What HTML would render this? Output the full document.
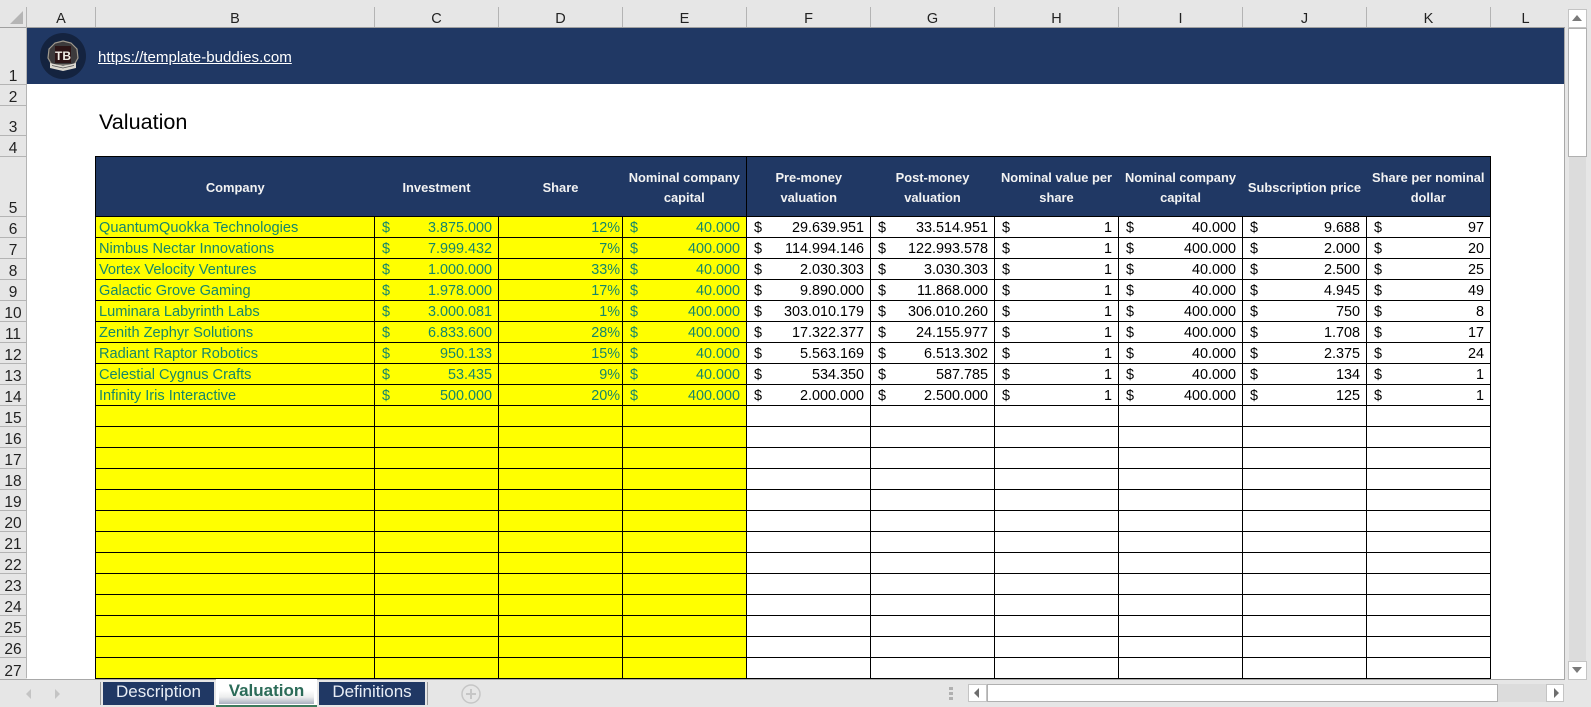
<!DOCTYPE html>
<html lang="en"><head><meta charset="utf-8"><title>Valuation</title>
<style>
html,body{margin:0;padding:0;background:#e6e6e6}
body{position:relative;width:1591px;height:707px;overflow:hidden;font-family:"Liberation Sans",sans-serif}
.a{position:absolute}
.ch{position:absolute;top:7px;height:20px;line-height:25px;text-align:center;font-size:14.5px;color:#222;border-right:1px solid #b4b4b4;box-sizing:border-box}
.rh{position:absolute;left:0;width:26px;text-align:center;font-size:15.5px;color:#222;border-bottom:1px solid #b4b4b4;box-sizing:border-box;display:flex;align-items:flex-end;justify-content:center;line-height:15px}
table{position:absolute;left:95px;top:156px;border-collapse:collapse;table-layout:fixed;width:1395px;font-size:14.4px;color:#000;background:#fff}
td,th{border:1px solid #000;padding:0;overflow:hidden;white-space:nowrap}
th{background:#203864;color:#f2f2f2;font-size:12.9px;line-height:20px;height:60px;font-weight:bold;text-align:center;border-left:none;border-right:none;padding-top:2px;box-sizing:border-box}
th.l{border-left:1px solid #000}th.r{border-right:1px solid #000}
tr{height:21px}
td{height:21px;line-height:17px;text-align:right;padding:3px 6px 0 7px;box-sizing:border-box}
td i{float:left;font-style:normal}
.y{background:#ff0;color:#15876a}
td.n{text-align:left;padding:3px 0 0 3px;font-size:14.6px}
td.p{padding-right:2px}
.tab{position:absolute;top:682px;height:23px;line-height:19px;font-size:17px;text-align:center;background:#203864;color:#e8edf5}
</style></head><body>
<!-- column headers -->
<div class="a" style="left:0;top:27px;width:1565px;height:1px;background:#a0a0a0"></div>
<div class="a" style="left:26px;top:7px;width:1px;height:671px;background:#b4b4b4"></div>
<svg class="a" style="left:10px;top:11px" width="14" height="14"><polygon points="13,0 13,13 0,13" fill="#b5b5b5"/></svg>
<div class="ch" style="left:27px;width:69px">A</div>
<div class="ch" style="left:96px;width:279px">B</div>
<div class="ch" style="left:375px;width:124px">C</div>
<div class="ch" style="left:499px;width:124px">D</div>
<div class="ch" style="left:623px;width:124px">E</div>
<div class="ch" style="left:747px;width:124px">F</div>
<div class="ch" style="left:871px;width:124px">G</div>
<div class="ch" style="left:995px;width:124px">H</div>
<div class="ch" style="left:1119px;width:124px">I</div>
<div class="ch" style="left:1243px;width:124px">J</div>
<div class="ch" style="left:1367px;width:124px">K</div>
<div class="ch" style="left:1491px;width:69px;border:none">L</div>
<!-- row headers -->
<div class="rh" style="top:28px;height:57px">1</div>
<div class="rh" style="top:85px;height:21px">2</div>
<div class="rh" style="top:106px;height:30px">3</div>
<div class="rh" style="top:136px;height:21px">4</div>
<div class="rh" style="top:157px;height:60px">5</div>
<div class="rh" style="top:217px;height:21px">6</div>
<div class="rh" style="top:238px;height:21px">7</div>
<div class="rh" style="top:259px;height:21px">8</div>
<div class="rh" style="top:280px;height:21px">9</div>
<div class="rh" style="top:301px;height:21px">10</div>
<div class="rh" style="top:322px;height:21px">11</div>
<div class="rh" style="top:343px;height:21px">12</div>
<div class="rh" style="top:364px;height:21px">13</div>
<div class="rh" style="top:385px;height:21px">14</div>
<div class="rh" style="top:406px;height:21px">15</div>
<div class="rh" style="top:427px;height:21px">16</div>
<div class="rh" style="top:448px;height:21px">17</div>
<div class="rh" style="top:469px;height:21px">18</div>
<div class="rh" style="top:490px;height:21px">19</div>
<div class="rh" style="top:511px;height:21px">20</div>
<div class="rh" style="top:532px;height:21px">21</div>
<div class="rh" style="top:553px;height:21px">22</div>
<div class="rh" style="top:574px;height:21px">23</div>
<div class="rh" style="top:595px;height:21px">24</div>
<div class="rh" style="top:616px;height:21px">25</div>
<div class="rh" style="top:637px;height:21px">26</div>
<div class="rh" style="top:658px;height:21px;border:none">27</div>
<!-- sheet -->
<div class="a" style="left:27px;top:28px;width:1537px;height:651px;background:#fff"></div>
<div class="a" style="left:1564px;top:28px;width:1px;height:651px;background:#a8a8a8"></div>
<div class="a" style="left:27px;top:28px;width:1537px;height:56px;background:#203864"></div>
<svg class="a" style="left:40px;top:33px" width="46" height="46" viewBox="0 0 46 46">
<circle cx="23" cy="23" r="23" fill="#14233f"/>
<path d="M23 8 L31 10 L37 16 L38 25 L34 32 L12 32 L8 25 L9 16 L15 10 Z" fill="#3c3a3c" stroke="#a09a8e" stroke-width="1.2"/>
<rect x="15" y="13" width="16" height="17" fill="#2c1416"/>
<path d="M10 30 L23 33 L36 30 L36 35 L23 38 L10 35 Z" fill="#dcd8d0"/>
<path d="M12 32.5 L23 35 L34 32.5" fill="none" stroke="#555" stroke-width=".8"/>
<text x="23" y="27" font-family="Liberation Sans,sans-serif" font-size="12" font-weight="bold" fill="#f0ede6" text-anchor="middle">TB</text>
</svg>
<div class="a" style="left:98px;top:49px;font-size:15.1px;line-height:18px;color:#fff;text-decoration:underline;white-space:nowrap">https://template-buddies.com</div>
<div class="a" style="left:99px;top:109px;font-size:21.6px;line-height:25px;color:#000">Valuation</div>
<table>
<colgroup><col style="width:279px"><col style="width:124px"><col style="width:124px"><col style="width:124px"><col style="width:124px"><col style="width:124px"><col style="width:124px"><col style="width:124px"><col style="width:124px"><col style="width:124px"></colgroup>
<tr style="height:60px"><th class="l">Company</th><th>Investment</th><th>Share</th><th class="r">Nominal company<br>capital</th><th class="l">Pre-money<br>valuation</th><th>Post-money<br>valuation</th><th>Nominal value per<br>share</th><th>Nominal company<br>capital</th><th>Subscription price</th><th class="r">Share per nominal<br>dollar</th></tr>
<tr><td class="y n">QuantumQuokka Technologies</td><td class="y"><i>$</i>3.875.000</td><td class="y p">12%</td><td class="y"><i>$</i>40.000</td><td><i>$</i>29.639.951</td><td><i>$</i>33.514.951</td><td><i>$</i>1</td><td><i>$</i>40.000</td><td><i>$</i>9.688</td><td><i>$</i>97</td></tr>
<tr><td class="y n">Nimbus Nectar Innovations</td><td class="y"><i>$</i>7.999.432</td><td class="y p">7%</td><td class="y"><i>$</i>400.000</td><td><i>$</i>114.994.146</td><td><i>$</i>122.993.578</td><td><i>$</i>1</td><td><i>$</i>400.000</td><td><i>$</i>2.000</td><td><i>$</i>20</td></tr>
<tr><td class="y n">Vortex Velocity Ventures</td><td class="y"><i>$</i>1.000.000</td><td class="y p">33%</td><td class="y"><i>$</i>40.000</td><td><i>$</i>2.030.303</td><td><i>$</i>3.030.303</td><td><i>$</i>1</td><td><i>$</i>40.000</td><td><i>$</i>2.500</td><td><i>$</i>25</td></tr>
<tr><td class="y n">Galactic Grove Gaming</td><td class="y"><i>$</i>1.978.000</td><td class="y p">17%</td><td class="y"><i>$</i>40.000</td><td><i>$</i>9.890.000</td><td><i>$</i>11.868.000</td><td><i>$</i>1</td><td><i>$</i>40.000</td><td><i>$</i>4.945</td><td><i>$</i>49</td></tr>
<tr><td class="y n">Luminara Labyrinth Labs</td><td class="y"><i>$</i>3.000.081</td><td class="y p">1%</td><td class="y"><i>$</i>400.000</td><td><i>$</i>303.010.179</td><td><i>$</i>306.010.260</td><td><i>$</i>1</td><td><i>$</i>400.000</td><td><i>$</i>750</td><td><i>$</i>8</td></tr>
<tr><td class="y n">Zenith Zephyr Solutions</td><td class="y"><i>$</i>6.833.600</td><td class="y p">28%</td><td class="y"><i>$</i>400.000</td><td><i>$</i>17.322.377</td><td><i>$</i>24.155.977</td><td><i>$</i>1</td><td><i>$</i>400.000</td><td><i>$</i>1.708</td><td><i>$</i>17</td></tr>
<tr><td class="y n">Radiant Raptor Robotics</td><td class="y"><i>$</i>950.133</td><td class="y p">15%</td><td class="y"><i>$</i>40.000</td><td><i>$</i>5.563.169</td><td><i>$</i>6.513.302</td><td><i>$</i>1</td><td><i>$</i>40.000</td><td><i>$</i>2.375</td><td><i>$</i>24</td></tr>
<tr><td class="y n">Celestial Cygnus Crafts</td><td class="y"><i>$</i>53.435</td><td class="y p">9%</td><td class="y"><i>$</i>40.000</td><td><i>$</i>534.350</td><td><i>$</i>587.785</td><td><i>$</i>1</td><td><i>$</i>40.000</td><td><i>$</i>134</td><td><i>$</i>1</td></tr>
<tr><td class="y n">Infinity Iris Interactive</td><td class="y"><i>$</i>500.000</td><td class="y p">20%</td><td class="y"><i>$</i>400.000</td><td><i>$</i>2.000.000</td><td><i>$</i>2.500.000</td><td><i>$</i>1</td><td><i>$</i>400.000</td><td><i>$</i>125</td><td><i>$</i>1</td></tr>
<tr><td class="y"></td><td class="y"></td><td class="y"></td><td class="y"></td><td></td><td></td><td></td><td></td><td></td><td></td></tr>
<tr><td class="y"></td><td class="y"></td><td class="y"></td><td class="y"></td><td></td><td></td><td></td><td></td><td></td><td></td></tr>
<tr><td class="y"></td><td class="y"></td><td class="y"></td><td class="y"></td><td></td><td></td><td></td><td></td><td></td><td></td></tr>
<tr><td class="y"></td><td class="y"></td><td class="y"></td><td class="y"></td><td></td><td></td><td></td><td></td><td></td><td></td></tr>
<tr><td class="y"></td><td class="y"></td><td class="y"></td><td class="y"></td><td></td><td></td><td></td><td></td><td></td><td></td></tr>
<tr><td class="y"></td><td class="y"></td><td class="y"></td><td class="y"></td><td></td><td></td><td></td><td></td><td></td><td></td></tr>
<tr><td class="y"></td><td class="y"></td><td class="y"></td><td class="y"></td><td></td><td></td><td></td><td></td><td></td><td></td></tr>
<tr><td class="y"></td><td class="y"></td><td class="y"></td><td class="y"></td><td></td><td></td><td></td><td></td><td></td><td></td></tr>
<tr><td class="y"></td><td class="y"></td><td class="y"></td><td class="y"></td><td></td><td></td><td></td><td></td><td></td><td></td></tr>
<tr><td class="y"></td><td class="y"></td><td class="y"></td><td class="y"></td><td></td><td></td><td></td><td></td><td></td><td></td></tr>
<tr><td class="y"></td><td class="y"></td><td class="y"></td><td class="y"></td><td></td><td></td><td></td><td></td><td></td><td></td></tr>
<tr><td class="y"></td><td class="y"></td><td class="y"></td><td class="y"></td><td></td><td></td><td></td><td></td><td></td><td></td></tr>
<tr><td class="y"></td><td class="y"></td><td class="y"></td><td class="y"></td><td></td><td></td><td></td><td></td><td></td><td></td></tr>
</table>
<!-- vertical scrollbar -->
<div class="a" style="left:1565px;top:0;width:26px;height:707px;background:#e6e6e6"></div>
<div class="a" style="left:1569px;top:28px;width:17px;height:651px;background:#dcdcdc"></div>
<div class="a" style="left:1568px;top:9px;width:17px;height:17px;background:#fff;border:1px solid #c4c4c4"></div>
<svg class="a" style="left:1572px;top:14px" width="10" height="8"><polygon points="5,1 10,7 0,7" fill="#7a7a7a"/></svg>
<div class="a" style="left:1568px;top:28px;width:17px;height:127px;background:#fff;border:1px solid #b0b0b0"></div>
<div class="a" style="left:1568px;top:661px;width:17px;height:17px;background:#fff;border:1px solid #c4c4c4"></div>
<svg class="a" style="left:1572px;top:666px" width="10" height="8"><polygon points="0,1 10,1 5,7" fill="#7a7a7a"/></svg>
<!-- bottom bar -->
<div class="a" style="left:0;top:679px;width:1565px;height:28px;background:#e6e6e6;border-top:1px solid #a8a8a8;box-sizing:border-box"></div>
<svg class="a" style="left:24px;top:688px" width="40" height="13"><polygon points="7,1 7,11 2,6" fill="#c4c4c4"/><polygon points="31,1 31,11 36,6" fill="#c4c4c4"/></svg>
<div class="a" style="left:100px;top:682px;width:1px;height:23px;background:#9a9a9a"></div>
<div class="tab" style="left:103px;width:111px">Description</div>
<div class="a" style="left:216px;top:679px;width:101px;height:26px;background:#fff;border-bottom:2px solid #3d7a5c"></div>
<div class="a" style="left:219px;top:681px;width:95px;height:23px;background:linear-gradient(#fff 40%,#eceded 70%,#aab0c0);text-align:center;font-size:17px;font-weight:bold;line-height:19px;color:#2b6b58">Valuation</div>
<div class="tab" style="left:319px;width:106px">Definitions</div>
<div class="a" style="left:427px;top:682px;width:1px;height:23px;background:#9a9a9a"></div>
<svg class="a" style="left:461px;top:684px" width="20" height="20"><circle cx="10" cy="10" r="9" fill="none" stroke="#c6c6c6" stroke-width="1.5"/><path d="M10 5V15M5 10H15" stroke="#c6c6c6" stroke-width="2"/></svg>
<div class="a" style="left:949px;top:687px;width:4px;height:3px;background:#b0b0b0"></div>
<div class="a" style="left:949px;top:692px;width:4px;height:3px;background:#b0b0b0"></div>
<div class="a" style="left:949px;top:697px;width:4px;height:3px;background:#b0b0b0"></div>
<div class="a" style="left:968px;top:684px;width:596px;height:18px;background:#dcdcdc"></div>
<div class="a" style="left:968px;top:684px;width:17px;height:16px;background:#fff;border:1px solid #c4c4c4"></div>
<svg class="a" style="left:973px;top:688px" width="8" height="10"><polygon points="6,0 6,10 1,5" fill="#6e6e6e"/></svg>
<div class="a" style="left:987px;top:684px;width:509px;height:16px;background:#fff;border:1px solid #b0b0b0"></div>
<div class="a" style="left:1546px;top:684px;width:16px;height:16px;background:#fff;border:1px solid #c4c4c4"></div>
<svg class="a" style="left:1552px;top:688px" width="8" height="10"><polygon points="2,0 2,10 7,5" fill="#6e6e6e"/></svg>
</body></html>
